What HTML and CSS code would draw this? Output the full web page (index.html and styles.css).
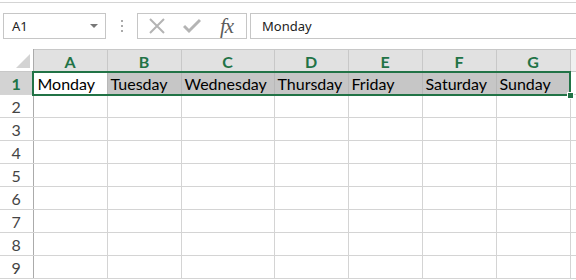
FILE: index.html
```html
<!DOCTYPE html>
<html lang="en">
<head>
<meta charset="UTF-8">
<title>Weekdays</title>
<link rel="stylesheet" href="styles.css">
</head>
<body>

<div class="formula-row">
  <div class="name-box">
    <span>A1</span>
    <span class="arrow"></span>
  </div>
  <div class="grip"><i></i><i></i><i></i></div>
  <div class="fx-buttons">
    <svg width="18" height="18" viewBox="0 0 18 18"><path d="M2 2 L16 16 M16 2 L2 16" stroke="#b4b4b4" stroke-width="2" fill="none"/></svg>
    <svg width="18" height="18" viewBox="0 0 18 18"><path d="M1 9 L6 14 L17 3" stroke="#b4b4b4" stroke-width="3" fill="none"/></svg>
    <span class="fx">fx</span>
  </div>
  <div class="formula-input">Monday</div>
</div>

<div class="sheet">
  <table class="grid">
    <colgroup>
      <col class="c-head"><col class="c-std"><col class="c-std"><col class="c-wide"><col class="c-std"><col class="c-std"><col class="c-std"><col class="c-std"><col>
    </colgroup>
    <tr class="col-heads">
      <th class="corner"><svg class="tri" width="14" height="14" viewBox="0 0 14 14"><path d="M14 0 L14 14 L0 14 Z" fill="#d3d3d3"/></svg></th>
      <th>A</th><th>B</th><th>C</th><th>D</th><th>E</th><th>F</th><th>G</th><th class="rest"></th>
    </tr>
    <tr class="sel-row">
      <th class="row-head sel">1</th>
      <td class="active">Monday</td><td>Tuesday</td><td>Wednesday</td><td>Thursday</td><td>Friday</td><td>Saturday</td><td>Sunday</td><td class="blank"></td>
    </tr>
    <tr><th class="row-head">2</th><td></td><td></td><td></td><td></td><td></td><td></td><td></td><td></td></tr>
    <tr><th class="row-head">3</th><td></td><td></td><td></td><td></td><td></td><td></td><td></td><td></td></tr>
    <tr><th class="row-head">4</th><td></td><td></td><td></td><td></td><td></td><td></td><td></td><td></td></tr>
    <tr><th class="row-head">5</th><td></td><td></td><td></td><td></td><td></td><td></td><td></td><td></td></tr>
    <tr><th class="row-head">6</th><td></td><td></td><td></td><td></td><td></td><td></td><td></td><td></td></tr>
    <tr><th class="row-head">7</th><td></td><td></td><td></td><td></td><td></td><td></td><td></td><td></td></tr>
    <tr><th class="row-head">8</th><td></td><td></td><td></td><td></td><td></td><td></td><td></td><td></td></tr>
    <tr><th class="row-head">9</th><td></td><td></td><td></td><td></td><td></td><td></td><td></td><td></td></tr>
  </table>
  <div class="selection"><span class="handle"></span></div>
</div>

</body>
</html>
```

FILE: styles.css
```css
* {
  box-sizing: border-box;
}
body {
  margin: 0;
  background: #fff;
  font-family: "Noto Sans", "Open Sans", sans-serif;
  overflow: hidden;
}
.formula-row {
  display: flex;
  align-items: center;
  height: 47px;
  margin-top: 2px;
  border-top: 1px solid #d4d4d4;
  padding: 9px 0 9px 3px;
}
.name-box {
  display: flex;
  align-items: center;
  justify-content: space-between;
  width: 103px;
  height: 26px;
  border: 1px solid #c6c6c6;
  padding: 0 7px 0 8px;
  font-size: 13px;
  color: #222;
}
.arrow {
  width: 0;
  height: 0;
  border-left: 4px solid transparent;
  border-right: 4px solid transparent;
  border-top: 4px solid #777;
}
.grip {
  display: flex;
  flex-direction: column;
  gap: 3px;
  width: 2px;
  margin: 0 14px 0 15px;
}
.grip i {
  width: 2px;
  height: 2px;
  background: #aaa;
}
.fx-buttons {
  display: flex;
  align-items: center;
  width: 110px;
  height: 26px;
  border: 1px solid #c6c6c6;
  padding: 0 0 0 10px;
  gap: 17px;
}
.fx {
  font-family: "Liberation Serif", serif;
  font-style: italic;
  font-size: 21px;
  color: #5c5c5c;
  margin-left: 2px;
  letter-spacing: -1px;
}
.formula-input {
  flex: 1;
  height: 26px;
  margin-left: 3px;
  border: 1px solid #c6c6c6;
  border-right: none;
  padding: 3px 0 0 11px;
  font-size: 13px;
  color: #222;
}
.sheet {
  position: relative;
}
.grid {
  border-collapse: collapse;
  table-layout: fixed;
  width: 576px;
}
.c-head { width: 33px; }
.c-std { width: 74px; }
.c-wide { width: 93px; }
.grid th, .grid td {
  border: 1px solid #d4d4d4;
  height: 23px;
  padding: 0;
  overflow: hidden;
  white-space: nowrap;
}
.col-heads th {
  height: 22px;
  background: #e1e1e1;
  border-color: #c8c8c8;
  color: #217346;
  font-family: "Lato", "Liberation Sans", sans-serif;
  font-weight: bold;
  font-size: 16px;
  text-align: center;
  padding-top: 1px;
}
.grid .corner {
  border-left: none;
  border-top: none;
  background: #fff;
  border-right-color: #ababab;
  padding: 0;
}
.tri {
  display: block;
  margin: 4px 3px 3px auto;
}
.col-heads .rest {
  background: #f0f0f0;
  border-right: none;
}
.row-head {
  border-left: none !important;
  border-right-color: #ababab !important;
  font-family: "Lato", "Liberation Sans", sans-serif;
  font-weight: normal;
  font-size: 16px;
  color: #444;
  text-align: center;
  padding-top: 1px !important;
}
.row-head.sel {
  background: #d3d3d3;
  color: #217346;
  font-weight: bold;
}
.sel-row td {
  background: #c6c6c6;
  border-color: #b8b8b8;
  font-family: "Lato", "Liberation Sans", sans-serif;
  font-size: 16px;
  color: #000;
  padding: 1px 0 0 3px;
}
.sel-row td.active {
  background: #fff;
  padding-left: 4px;
}
.sel-row td.blank {
  background: #fff;
  border-color: #d4d4d4;
}
.grid td:last-child,
.grid th:last-child {
  border-right: none;
}
.selection {
  position: absolute;
  left: 32px;
  top: 22px;
  width: 539px;
  height: 25px;
  border: 2px solid #217346;
  pointer-events: none;
}
.handle {
  position: absolute;
  right: -5px;
  bottom: -5px;
  width: 7px;
  height: 7px;
  background: #217346;
  border: 1px solid #fff;
}
```
